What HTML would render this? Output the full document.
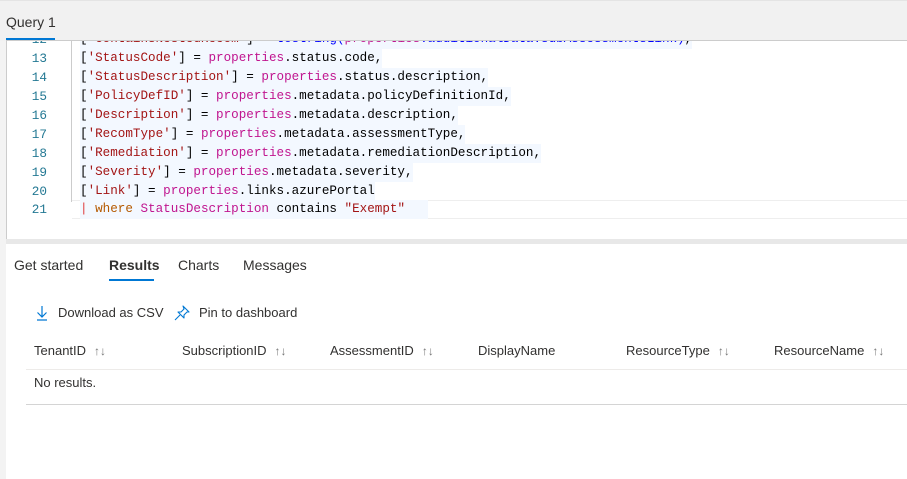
<!DOCTYPE html>
<html><head><style>
body{margin:0;width:907px;height:479px;background:#f3f3f3;position:relative;overflow:hidden;font-family:"Segoe UI","Liberation Sans",sans-serif;}
.top{position:absolute;left:0;top:0;width:907px;height:40px;background:#f1f1f1;border-top:1px solid #e4e4e4;}
.q{position:absolute;left:6px;top:14px;font-size:14px;color:#323130;}
.qu{position:absolute;left:6px;top:38px;width:49px;height:2px;background:#0078d4;}
.ed{position:absolute;left:6px;top:40px;width:901px;height:199px;background:#fff;border-left:1px solid #ccc;border-top:1px solid #ccc;border-bottom:1px solid #ccc;overflow:hidden;}
.gut{position:absolute;left:64px;top:0;width:1px;height:161px;background:#ccc;}
.ln{position:absolute;left:0;width:40px;text-align:right;font-family:"Liberation Mono",monospace;font-size:12.7px;color:#237893;}
.cd{position:absolute;left:73px;font-family:"Liberation Mono",monospace;font-size:12.6px;white-space:pre;background:#f3f8ff;color:#000;height:19px;line-height:19px;}
.s{color:#a31515}.p{color:#c0158f}.f{color:#0000ff}.k{color:#b55a00}
.hl{position:absolute;left:65px;top:159px;width:836px;height:17px;border-top:1px solid #eee;border-bottom:1px solid #eee;}
.sep{position:absolute;left:6px;top:239px;width:901px;height:5px;background:#e8e8e8;}
.pan{position:absolute;left:6px;top:244px;width:901px;height:235px;background:#fff;}
.t{position:absolute;top:13px;font-size:14px;color:#323130;}
.btn{position:absolute;top:61px;font-size:13px;color:#323130;}
.h{position:absolute;top:99px;font-size:13px;color:#323130;}
.ar{color:#777;font-size:12px;margin-left:8px;}
</style></head><body>
<div class="top"></div>
<div class="q">Query 1</div>
<div class="qu"></div>
<div class="ed">
<div class="gut"></div>
<div class="hl"></div>
<div class="ln" style="top:-11px;line-height:19px;height:19px">12</div><div class="cd" style="top:-11px">[<span class="s">'ContainsNestedRecom'</span>] = <span class="f">tostring(</span><span class="p">properties</span><span class="f">.additionalData.subAssessmentsLink)</span>,</div>
<div class="ln" style="top:8px;line-height:19px">13</div><div class="cd" style="top:8px">[<span class="s">'StatusCode'</span>] = <span class="p">properties</span>.status.code,</div>
<div class="ln" style="top:27px;line-height:19px">14</div><div class="cd" style="top:27px">[<span class="s">'StatusDescription'</span>] = <span class="p">properties</span>.status.description,</div>
<div class="ln" style="top:46px;line-height:19px">15</div><div class="cd" style="top:46px">[<span class="s">'PolicyDefID'</span>] = <span class="p">properties</span>.metadata.policyDefinitionId,</div>
<div class="ln" style="top:65px;line-height:19px">16</div><div class="cd" style="top:65px">[<span class="s">'Description'</span>] = <span class="p">properties</span>.metadata.description,</div>
<div class="ln" style="top:84px;line-height:19px">17</div><div class="cd" style="top:84px">[<span class="s">'RecomType'</span>] = <span class="p">properties</span>.metadata.assessmentType,</div>
<div class="ln" style="top:103px;line-height:19px">18</div><div class="cd" style="top:103px">[<span class="s">'Remediation'</span>] = <span class="p">properties</span>.metadata.remediationDescription,</div>
<div class="ln" style="top:122px;line-height:19px">19</div><div class="cd" style="top:122px">[<span class="s">'Severity'</span>] = <span class="p">properties</span>.metadata.severity,</div>
<div class="ln" style="top:141px;line-height:19px">20</div><div class="cd" style="top:141px">[<span class="s">'Link'</span>] = <span class="p">properties</span>.links.azurePortal</div>
<div class="ln" style="top:159px;line-height:19px">21</div><div class="cd" style="top:159px"><span style="color:#e04040">|</span> <span class="k">where</span> <span class="p">StatusDescription</span> contains <span class="s">"Exempt"</span>   </div>
</div>
<div class="sep"></div>
<div class="pan">
<div class="t" style="left:8px">Get started</div>
<div class="t" style="left:103px;font-weight:600">Results</div>
<div style="position:absolute;left:103px;top:35px;width:45px;height:2px;background:#0078d4"></div>
<div class="t" style="left:172px">Charts</div>
<div class="t" style="left:237px">Messages</div>
<svg style="position:absolute;left:30px;top:61px" width="12" height="16" viewBox="0 0 12 16"><path d="M6 1v11M1.5 7.5L6 12l4.5-4.5M1 15h10" stroke="#0078d4" stroke-width="1.2" fill="none"/></svg>
<div class="btn" style="left:52px">Download as CSV</div>
<svg style="position:absolute;left:168px;top:61px" width="16" height="16" viewBox="0 0 16 16"><path d="M9 1l6 6-2 0-3 3 0 3-6-6 3 0 3-3zM6 10l-5 5" stroke="#0078d4" stroke-width="1.1" fill="none" stroke-linejoin="round"/></svg>
<div class="btn" style="left:193px">Pin to dashboard</div>
<div class="h" style="left:28px">TenantID<span class="ar">↑↓</span></div>
<div class="h" style="left:176px">SubscriptionID<span class="ar">↑↓</span></div>
<div class="h" style="left:324px">AssessmentID<span class="ar">↑↓</span></div>
<div class="h" style="left:472px">DisplayName</div>
<div class="h" style="left:620px">ResourceType<span class="ar">↑↓</span></div>
<div class="h" style="left:768px">ResourceName<span class="ar">↑↓</span></div>
<div style="position:absolute;left:20px;top:125px;width:881px;height:1px;background:#edebe9"></div>
<div style="position:absolute;left:28px;top:131px;font-size:13px;color:#323130">No results.</div>
<div style="position:absolute;left:20px;top:160px;width:881px;height:1px;background:#d4d4d4"></div>
</div>
</body></html>
